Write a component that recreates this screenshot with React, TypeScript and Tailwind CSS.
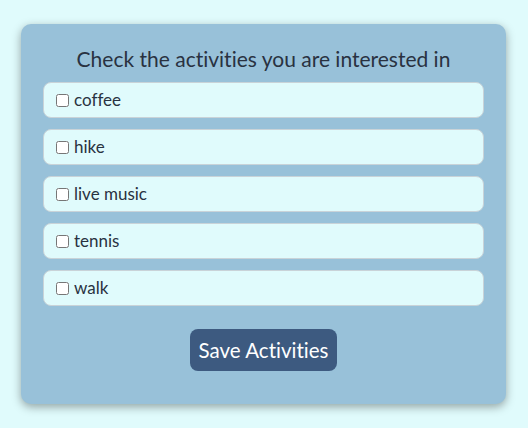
import { useState } from "react";

const activities = ["coffee", "hike", "live music", "tennis", "walk"];

export default function App() {
  const [checked, setChecked] = useState<Record<string, boolean>>({});

  return (
    <div className="min-h-[428px] bg-[#e0fbfc] pt-[24px] font-['Lato',sans-serif] text-[#293241] [font-variant-ligatures:none]">
      <div className="ml-[21px] mr-[22px] rounded-[10px] bg-[#98c1d9] px-[22px] pt-[19px] pb-[33px] shadow-[0_3px_10px_rgba(0,0,0,0.35)]">
        <h1 className="text-center text-[21px] leading-[32px]">Check the activities you are interested in</h1>
        <div className="mt-[7px] flex flex-col gap-[11px]">
          {activities.map((a) => (
            <label
              key={a}
              className="flex h-[36px] items-center gap-[5px] rounded-[8px] border border-[#c9d3d8] bg-[#e0fbfc] pl-[12px] text-[17px]"
            >
              <input
                type="checkbox"
                className="h-[13px] w-[13px]"
                checked={!!checked[a]}
                onChange={(e) => setChecked({ ...checked, [a]: e.target.checked })}
              />
              {a}
            </label>
          ))}
        </div>
        <div className="mt-[23px] flex justify-center">
          <button className="h-[42px] rounded-[8px] bg-[#3d5a80] px-[9px] text-[20.5px] text-white">
            Save Activities
          </button>
        </div>
      </div>
    </div>
  );
}
